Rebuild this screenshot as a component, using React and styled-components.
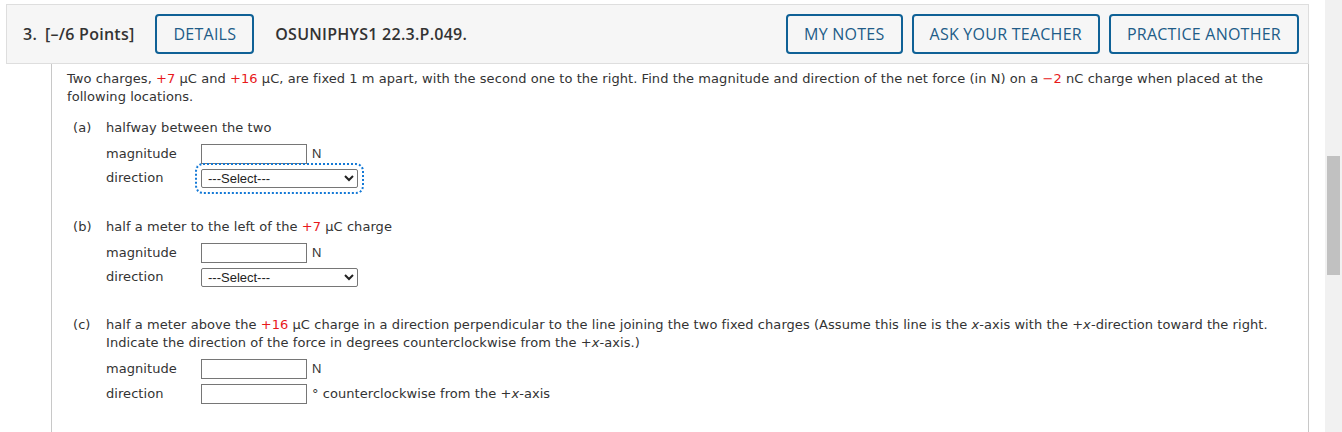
import React from "react";
import styled, { createGlobalStyle } from "styled-components";

const Global = createGlobalStyle`
  html, body { margin: 0; padding: 0; background: #fff; }
  body { font-family: "DejaVu Sans", Verdana, sans-serif; color: #333; }
`;

const Page = styled.div`
  display: flex;
  width: 1342px;
  height: 432px;
  overflow: hidden;
`;

const Main = styled.div`
  flex: 1;
  display: flex;
  flex-direction: column;
  min-width: 0;
`;

const Header = styled.div`
  display: flex;
  align-items: center;
  margin: 4px 16px 0 6px;
  padding: 9px 9px 9px 16px;
  background: #f6f6f6;
  border: 1px solid #dedede;
  font-family: "Open Sans", sans-serif;
  font-size: 16px;
`;

const Strong = styled.span`
  font-weight: 600;
  color: #333;
  letter-spacing: 0.25px;
  margin-right: ${(p) => p.$mr || 0}px;
  white-space: nowrap;
`;

const OutlineButton = styled.button`
  height: 40px;
  padding: 0 16px;
  border: 2px solid #0f6196;
  border-radius: 4px;
  background: transparent;
  color: #215c88;
  font-family: "Open Sans", sans-serif;
  font-size: 16px;
  font-weight: 400;
  letter-spacing: 0.25px;
  margin-right: ${(p) => p.$mr || 0}px;
  white-space: nowrap;
  cursor: pointer;
`;

const Spacer = styled.div`
  flex: 1;
`;

const Actions = styled.div`
  display: flex;
  gap: 9px;
`;

const Body = styled.div`
  flex: 1;
  margin: 0 16px 0 51px;
  padding: 6px 16px 0 15px;
  background: #fff;
  border-left: 1px solid #c8c8c8;
  border-right: 1px solid #c8c8c8;
  font-size: 13px;
  line-height: 18px;
  letter-spacing: 0.06px;
`;

const Para = styled.p`
  margin: 0 0 13px;
`;

const Red = styled.span`
  color: #e8191b;
`;

const Part = styled.div`
  display: flex;
  margin: 0 0 ${(p) => p.$mb || 28}px 6px;
`;

const PartLabel = styled.div`
  width: 33px;
  flex: none;
`;

const PartContent = styled.div`
  flex: 1;
`;

const PartTitle = styled.div`
  margin-bottom: 5px;
`;

const FieldRow = styled.div`
  display: flex;
  align-items: center;
  height: ${(p) => p.$h || 24}px;
`;

const FieldLabel = styled.div`
  width: 95px;
  flex: none;
`;

const TextBox = styled.input`
  box-sizing: border-box;
  width: 106px;
  height: 20px;
  margin: 0;
  border: 1px solid #767676;
  border-radius: 0;
  background: #fff;
`;

const Unit = styled.span`
  margin-left: 5px;
  font-family: ${(p) => (p.$verdana ? '"DejaVu Sans", Verdana, sans-serif' : '"Liberation Sans", Arial, sans-serif')};
  font-size: 13px;
`;

const Select = styled.select`
  box-sizing: border-box;
  width: 157px;
  height: 19px;
  margin: 0;
  padding: 0 0 0 2px;
  border: 1px solid #767676;
  border-radius: 2px;
  background: #fff;
  color: #222;
  font-family: "Liberation Sans", Arial, sans-serif;
  font-size: 13px;
  letter-spacing: 0;
  outline: ${(p) => (p.$focused ? "2px dotted #1479d6" : "none")};
  outline-offset: 4px;
`;

const Scrollbar = styled.div`
  width: 17px;
  flex: none;
  background: #f1f1f1;
  display: flex;
  justify-content: center;
`;

const Thumb = styled.div`
  width: 13px;
  height: 119px;
  margin-top: 156px;
  background: #c1c1c1;
`;

function Fields({ select, focused, lastHeight }) {
  return (
    <>
      <FieldRow>
        <FieldLabel>magnitude</FieldLabel>
        <TextBox type="text" />
        <Unit>N</Unit>
      </FieldRow>
      <FieldRow $h={lastHeight}>
        <FieldLabel>direction</FieldLabel>
        {select ? (
          <Select $focused={focused} defaultValue="">
            <option value="">---Select---</option>
          </Select>
        ) : (
          <>
            <TextBox type="text" />
            <Unit $verdana>
              ° counterclockwise from the +<i>x</i>-axis
            </Unit>
          </>
        )}
      </FieldRow>
    </>
  );
}

export default function App() {
  return (
    <>
      <Global />
      <Page>
        <Main>
          <Header>
            <Strong $mr={8}>3.</Strong>
            <Strong $mr={21}>[–/6 Points]</Strong>
            <OutlineButton $mr={21}>DETAILS</OutlineButton>
            <Strong>OSUNIPHYS1 22.3.P.049.</Strong>
            <Spacer />
            <Actions>
              <OutlineButton>MY NOTES</OutlineButton>
              <OutlineButton>ASK YOUR TEACHER</OutlineButton>
              <OutlineButton>PRACTICE ANOTHER</OutlineButton>
            </Actions>
          </Header>
          <Body>
            <Para>
              Two charges, <Red>+7</Red> μC and <Red>+16</Red> μC, are fixed 1 m apart, with the second one to
              the right. Find the magnitude and direction of the net force (in N) on a <Red>−2</Red> nC charge
              when placed at the following locations.
            </Para>
            <Part>
              <PartLabel>(a)</PartLabel>
              <PartContent>
                <PartTitle>halfway between the two</PartTitle>
                <Fields select focused />
              </PartContent>
            </Part>
            <Part $mb={27}>
              <PartLabel>(b)</PartLabel>
              <PartContent>
                <PartTitle>
                  half a meter to the left of the <Red>+7</Red> μC charge
                </PartTitle>
                <Fields select />
              </PartContent>
            </Part>
            <Part>
              <PartLabel>(c)</PartLabel>
              <PartContent>
                <PartTitle>
                  half a meter above the <Red>+16</Red> μC charge in a direction perpendicular to the line joining
                  the two fixed charges (Assume this line is the <i>x</i>-axis with the +<i>x</i>-direction toward
                  the right. Indicate the direction of the force in degrees counterclockwise from the +<i>x</i>-axis.)
                </PartTitle>
                <Fields lastHeight={26} />
              </PartContent>
            </Part>
          </Body>
        </Main>
        <Scrollbar>
          <Thumb />
        </Scrollbar>
      </Page>
    </>
  );
}
